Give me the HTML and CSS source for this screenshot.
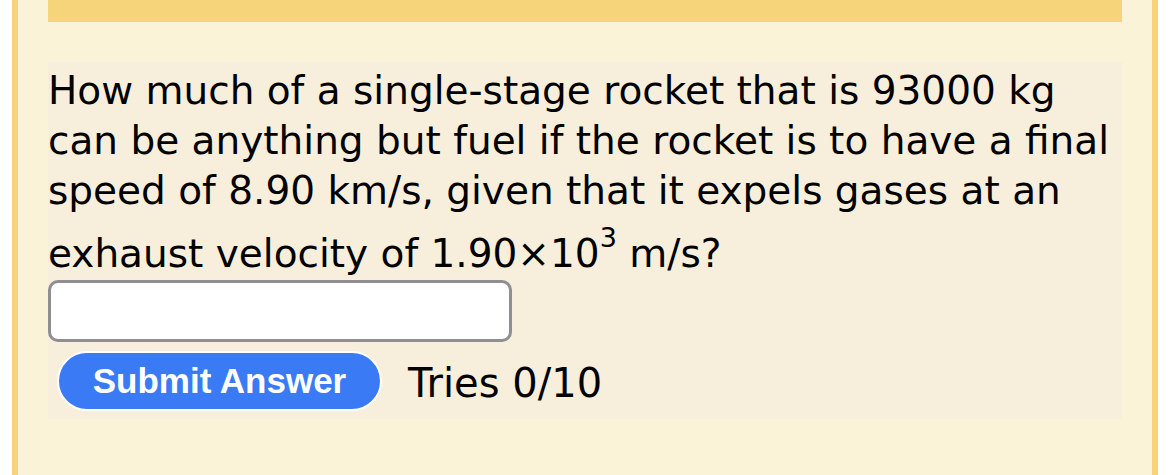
FILE: index.html
```html
<!DOCTYPE html>
<html lang="en">
<head>
  <meta charset="UTF-8">
  <title>Problem</title>
  <meta name="viewport" content="width=device-width, initial-scale=1">
  <link rel="stylesheet" href="styles.css">
</head>
<body>

  <div class="problem">
    <div class="topbar"></div>

    <div class="question">
      <p class="text">How much of a single-stage rocket that is 93000 kg can be anything but fuel if the rocket is to have a final speed of 8.90 km/s, given that it expels gases at an exhaust velocity of 1.90&times;10<sup>3</sup> m/s?</p>

      <input type="text" class="answer">

      <div class="actions">
        <button class="submit">Submit Answer</button>
        <span class="tries">Tries 0/10</span>
      </div>
    </div>
  </div>

</body>
</html>
```

FILE: styles.css
```css
body {
  margin: 0;
  background: #fff;
  font-family: 'DejaVu Sans', Verdana, sans-serif;
  color: #000;
}

.problem {
  margin-left: 12px;
  width: 1146px;
  box-sizing: border-box;
  min-height: 475px;
  border-left: 6px solid #f6d57a;
  border-right: 6px solid #f6d57a;
  background-color: #faf3d8;
  padding: 0 30px;
}

.topbar {
  height: 22px;
  background-color: #f6d57a;
}

.question {
  margin-top: 40px;
  background-color: #f7efdb;
  padding-bottom: 8px;
}

.text {
  margin: 0;
  padding-top: 4px;
  font-size: 39px;
  line-height: 50px;
}

.text sup {
  font-size: 27px;
  line-height: 43px;
  vertical-align: 20px;
}

.answer {
  display: block;
  width: 464px;
  height: 62px;
  box-sizing: border-box;
  margin-top: 1px;
  border: 3px solid #8e8e93;
  border-radius: 10px;
  background: #fff;
  font-size: 28px;
}

.actions {
  display: flex;
  align-items: center;
  gap: 26px;
  margin-top: 9px;
  padding-left: 9px;
}

.submit {
  width: 325px;
  height: 60px;
  border: 2px solid #fff;
  border-radius: 30px;
  background-color: #3a7bf5;
  color: #fff;
  font-family: 'Liberation Sans', Arial, sans-serif;
  font-weight: bold;
  font-size: 35px;
  cursor: pointer;
}

.tries {
  font-size: 40px;
  padding-top: 4px;
}
```
